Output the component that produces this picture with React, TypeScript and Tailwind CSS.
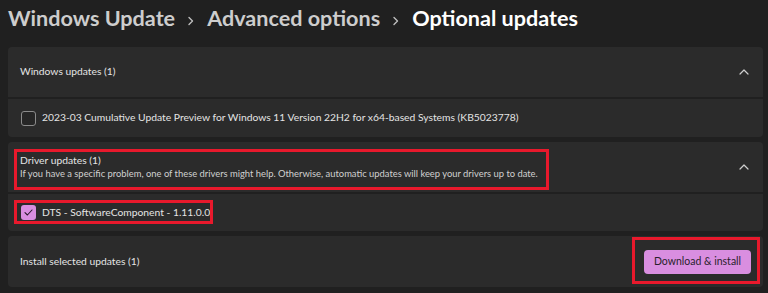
import React from "react";

const font = { fontFamily: 'Lato, "Noto Sans", sans-serif' };

function ChevronUp() {
  return (
    <svg width="10" height="6" viewBox="0 0 10 6" className="text-[#cfcfcf]">
      <path d="M1 5 L5 1 L9 5" fill="none" stroke="currentColor" strokeWidth="1.2" strokeLinecap="round" strokeLinejoin="round" />
    </svg>
  );
}

function Crumb() {
  return (
    <svg width="8" height="10" viewBox="0 0 8 10" className="mx-[12px] mt-[3px] text-[#bdbdbd]">
      <path d="M2 1.5 L5.5 5 L2 8.5" fill="none" stroke="currentColor" strokeWidth="1.4" strokeLinecap="round" strokeLinejoin="round" />
    </svg>
  );
}

export default function App() {
  return (
    <div className="w-[768px] h-[293px] overflow-hidden bg-[#202020] text-[#e4e4e4]" style={font}>
      {/* breadcrumb title */}
      <div className="flex items-center h-[38px] pl-[8px] text-[21.6px] font-bold leading-none">
        <span className="text-[#cdcdcd]">Windows Update</span>
        <Crumb />
        <span className="text-[#cdcdcd]">Advanced options</span>
        <Crumb />
        <span className="text-white">Optional updates</span>
      </div>

      <div className="mt-[9px] mx-[8px] w-[755px] flex flex-col">
        {/* Windows updates group */}
        <div className="flex items-center justify-between h-[50px] px-[12px] bg-[#2b2b2b] rounded-t-[4px]">
          <span className="text-[10.3px]">Windows updates (1)</span>
          <div className="mr-[2px]"><ChevronUp /></div>
        </div>
        <div className="flex items-center h-[38px] mt-[2px] px-[13px] bg-[#2b2b2b] rounded-b-[4px]">
          <div className="w-[15px] h-[15px] rounded-[3px] border border-[#8b8b8b] bg-[#262626]" />
          <span className="ml-[6px] text-[10.3px]">
            2023-03 Cumulative Update Preview for Windows 11 Version 22H2 for x64-based Systems (KB5023778)
          </span>
        </div>

        {/* Driver updates group */}
        <div className="relative flex items-center justify-between h-[50px] mt-[5px] px-[12px] bg-[#2b2b2b] rounded-t-[4px]">
          <div className="flex flex-col leading-tight">
            <span className="text-[10.3px]">Driver updates (1)</span>
            <span className="text-[9.4px] text-[#d0d0d0] mt-[1px]">
              If you have a specific problem, one of these drivers might help. Otherwise, automatic updates will keep your drivers up to date.
            </span>
          </div>
          <div className="mr-[2px]"><ChevronUp /></div>
          <div className="absolute left-[6px] top-[7px] w-[535px] h-[41px] border-[3px] border-[#e8192c]" />
        </div>
        <div className="relative flex items-center h-[37px] mt-[2px] px-[13px] bg-[#2b2b2b] rounded-b-[4px]">
          <div className="flex items-center justify-center w-[15px] h-[15px] rounded-[3px] bg-[#d98ee0]">
            <svg width="9" height="7" viewBox="0 0 9 7">
              <path d="M1 3.6 L3.4 6 L8 1" fill="none" stroke="#2a1a2c" strokeWidth="1.1" strokeLinecap="round" strokeLinejoin="round" />
            </svg>
          </div>
          <span className="ml-[6px] text-[10.3px]">DTS - SoftwareComponent - 1.11.0.0</span>
          <div className="absolute left-[6px] top-[6px] w-[199px] h-[24px] border-[3px] border-[#e8192c]" />
        </div>

        {/* install row */}
        <div className="relative flex items-center justify-between h-[51px] mt-[5px] px-[12px] bg-[#2b2b2b] rounded-[4px]">
          <span className="text-[10.3px]">Install selected updates (1)</span>
          <button className="h-[24px] w-[107px] rounded-[4px] bg-[#d98ee0] text-[10.5px] text-[#2a1f2c]">
            Download &amp; install
          </button>
          <div className="absolute left-[624px] top-[1px] w-[128px] h-[47px] border-[3px] border-[#e8192c]" />
        </div>
      </div>
    </div>
  );
}
